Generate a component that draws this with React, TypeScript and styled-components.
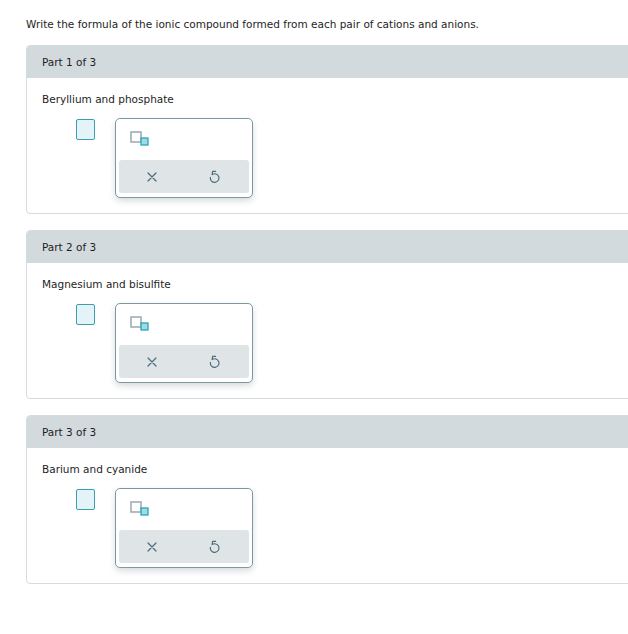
import React, { FC } from 'react';
import styled, { createGlobalStyle } from 'styled-components';

const GlobalStyle = createGlobalStyle`
    html, body {
        margin: 0;
        padding: 0;
        background: #ffffff;
        overflow: hidden;
    }
    body {
        font-family: "DejaVu Sans", Verdana, sans-serif;
        font-size: 10.5px;
        color: #1e1e1e;
    }
`;

const Page = styled.div`
    width: 640px;
    padding: 17px 0 40px 26px;
`;

const Prompt = styled.p`
    margin: 0 0 14px 0;
    line-height: 14px;
`;

const PartList = styled.div`
    display: flex;
    flex-direction: column;
    gap: 16px;
`;

const Card = styled.section`
    border: 1px solid #d4dcdf;
    border-radius: 4px;
    overflow: hidden;
`;

const CardHeader = styled.div`
    height: 32px;
    display: flex;
    align-items: center;
    padding: 0 15px;
    background: #d2dadd;
`;

const CardBody = styled.div`
    padding: 14px 15px 15px 15px;
`;

const Question = styled.div`
    line-height: 14px;
    margin-bottom: 12px;
`;

const AnswerRow = styled.div`
    display: flex;
    align-items: flex-start;
    gap: 20px;
    padding-left: 34px;
`;

const AnswerSlot = styled.div`
    width: 17px;
    height: 19px;
    margin-top: 1px;
    border: 1.5px solid #3a9fae;
    border-radius: 2px;
    background: #e3f3f8;
`;

const Palette = styled.div`
    width: 130px;
    height: 74px;
    border: 1px solid #7e98a2;
    border-radius: 5px;
    background: #fff;
    box-shadow: 0 3px 6px rgba(40, 60, 70, 0.18);
    display: flex;
    flex-direction: column;
    padding: 0 3px 4px 3px;
    box-sizing: content-box;
`;

const PaletteTop = styled.div`
    height: 41px;
    flex: none;
    display: flex;
    align-items: flex-start;
    padding: 12px 0 0 11px;
    box-sizing: border-box;
`;

const PaletteBar = styled.div`
    flex: 1;
    display: flex;
    align-items: center;
    justify-content: center;
    gap: 43px;
    padding-right: 2px;
    background: #dfe5e7;
    border-radius: 3px;
`;

const IconButton = styled.span`
    display: flex;
    align-items: center;
    justify-content: center;
    width: 20px;
    height: 20px;
    color: #4d6b78;
`;

const SubscriptIcon: FC = () => (
    <svg width="20" height="16" viewBox="0 0 20 16">
        <rect x="1" y="1" width="10" height="10" fill="#fff" stroke="#9aa9af" strokeWidth="1.5" />
        <rect x="11" y="7" width="7" height="7" fill="#9fdbe6" stroke="#2ea3b8" strokeWidth="1.3" />
    </svg>
);

const ClearIcon: FC = () => (
    <svg width="10" height="10" viewBox="0 0 10 10">
        <path d="M1 1 L9 9 M9 1 L1 9" stroke="currentColor" strokeWidth="1.2" strokeLinecap="round" />
    </svg>
);

// круговая стрелка "отменить"
const UndoIcon: FC = () => (
    <svg width="11" height="13" viewBox="0 0 11 13">
        <path
            d="M6.6 1.3 H3.6 L3.1 4.6 A4.3 4.3 0 1 1 1.4 7.4"
            fill="none"
            stroke="currentColor"
            strokeWidth="1.15"
            strokeLinecap="round"
            strokeLinejoin="round"
        />
    </svg>
);

const parts = [
    'Beryllium and phosphate',
    'Magnesium and bisulfite',
    'Barium and cyanide',
];

const App: FC = () => {
    return (
        <>
            <GlobalStyle />
            <Page>
                <Prompt>Write the formula of the ionic compound formed from each pair of cations and anions.</Prompt>
                <PartList>
                    {parts.map((q, i) => (
                        <Card key={q}>
                            <CardHeader>Part {i + 1} of {parts.length}</CardHeader>
                            <CardBody>
                                <Question>{q}</Question>
                                <AnswerRow>
                                    <AnswerSlot />
                                    <Palette>
                                        <PaletteTop>
                                            <SubscriptIcon />
                                        </PaletteTop>
                                        <PaletteBar>
                                            <IconButton><ClearIcon /></IconButton>
                                            <IconButton><UndoIcon /></IconButton>
                                        </PaletteBar>
                                    </Palette>
                                </AnswerRow>
                            </CardBody>
                        </Card>
                    ))}
                </PartList>
            </Page>
        </>
    );
};

export default App;
